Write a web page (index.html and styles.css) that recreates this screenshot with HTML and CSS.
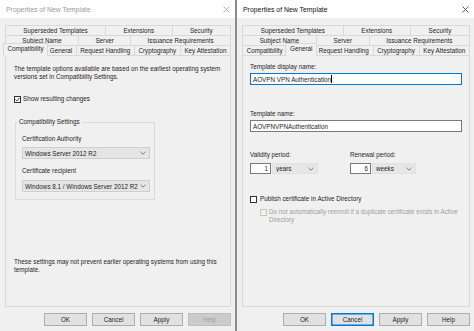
FILE: index.html
```html
<!DOCTYPE html>
<html lang="en">
<head>
<meta charset="utf-8">
<title>Properties of New Template</title>
<link rel="stylesheet" href="styles.css">
</head>
<body>
<div class="screen">
  <section class="win win-left inactive">
    <header class="titlebar">
      <span class="title">Properties of New Template</span>
      <svg class="close" width="7" height="7" viewBox="0 0 7 7"><path d="M0.5 0.5L6.5 6.5M6.5 0.5L0.5 6.5"/></svg>
    </header>
    <div class="content">
      <div class="tabs">
        <div class="tabrow"><span class="tab">Superseded Templates</span><span class="tab">Extensions</span><span class="tab">Security</span></div>
        <div class="tabrow"><span class="tab">Subject Name</span><span class="tab">Server</span><span class="tab">Issuance Requirements</span></div>
        <div class="tabrow"><span class="tab selected">Compatibility</span><span class="tab">General</span><span class="tab">Request Handling</span><span class="tab">Cryptography</span><span class="tab">Key Attestation</span></div>
      </div>
      <div class="panel compat">
        <p class="note">The template options available are based on the earliest operating system versions set in Compatibility Settings.</p>
        <div class="check show-changes">
          <span class="box"><svg width="5" height="5" viewBox="0 0 5 5"><path d="M0.4 2.4L1.9 3.9L4.6 0.8"/></svg></span>
          <span>Show resulting changes</span>
        </div>
        <fieldset class="group">
          <legend>Compatibility Settings</legend>
          <div class="field-label">Certification Authority</div>
          <div class="combo list"><span class="combo-text">Windows Server 2012 R2</span><svg class="chev" width="6" height="4" viewBox="0 0 6 4"><path d="M0.5 0.8L3 3.2L5.5 0.8"/></svg></div>
          <div class="field-label second">Certificate recipient</div>
          <div class="combo list second-combo"><span class="combo-text">Windows 8.1 / Windows Server 2012 R2</span><svg class="chev" width="6" height="4" viewBox="0 0 6 4"><path d="M0.5 0.8L3 3.2L5.5 0.8"/></svg></div>
        </fieldset>
        <p class="note bottom-note">These settings may not prevent earlier operating systems from using this template.</p>
      </div>
      <div class="buttons">
        <span class="btn">OK</span><span class="btn">Cancel</span><span class="btn">Apply</span><span class="btn disabled">Help</span>
      </div>
    </div>
  </section>
  <div class="divider"></div>
  <section class="win win-right active">
    <header class="titlebar">
      <span class="title">Properties of New Template</span>
      <svg class="close" width="7" height="7" viewBox="0 0 7 7"><path d="M0.5 0.5L6.5 6.5M6.5 0.5L0.5 6.5"/></svg>
    </header>
    <div class="content">
      <div class="tabs">
        <div class="tabrow"><span class="tab">Superseded Templates</span><span class="tab">Extensions</span><span class="tab">Security</span></div>
        <div class="tabrow"><span class="tab">Subject Name</span><span class="tab">Server</span><span class="tab">Issuance Requirements</span></div>
        <div class="tabrow"><span class="tab">Compatibility</span><span class="tab selected">General</span><span class="tab">Request Handling</span><span class="tab">Cryptography</span><span class="tab">Key Attestation</span></div>
      </div>
      <div class="panel general">
        <div class="field-label">Template display name:</div>
        <div class="textbox focused"><span>AOVPN VPN Authentication</span><span class="caret"></span></div>
        <div class="field-label spaced">Template name:</div>
        <div class="textbox"><span>AOVPNVPNAuthentication</span></div>
        <div class="periods">
          <div class="period">
            <div class="field-label">Validity period:</div>
            <div class="spin"><span class="num">1</span><span class="combo unit"><span class="combo-text">years</span><svg class="chev" width="6" height="4" viewBox="0 0 6 4"><path d="M0.5 0.8L3 3.2L5.5 0.8"/></svg></span></div>
          </div>
          <div class="period">
            <div class="field-label">Renewal period:</div>
            <div class="spin"><span class="num">6</span><span class="combo unit"><span class="combo-text">weeks</span><svg class="chev" width="6" height="4" viewBox="0 0 6 4"><path d="M0.5 0.8L3 3.2L5.5 0.8"/></svg></span></div>
          </div>
        </div>
        <div class="check publish">
          <span class="box"></span>
          <span>Publish certificate in Active Directory</span>
        </div>
        <div class="check sub disabled-check">
          <span class="box"></span>
          <span class="sub-text">Do not automatically reenroll if a duplicate certificate exists in Active Directory</span>
        </div>
      </div>
      <div class="buttons">
        <span class="btn">OK</span><span class="btn default">Cancel</span><span class="btn">Apply</span><span class="btn">Help</span>
      </div>
    </div>
  </section>
</div>
</body>
</html>
```

FILE: styles.css
```css
* { box-sizing: border-box; margin: 0; padding: 0; }
html, body { width: 474px; height: 331px; overflow: hidden; }
body {
  font-family: "Liberation Sans", Arial, sans-serif;
  font-size: 6.3px;
  color: #1e1e1e;
  background: #8e8e8e;
}
.screen { display: flex; height: 331px; }
.win { display: flex; flex-direction: column; background: #f0f0f0; }
.win-left { width: 235px; }
.divider { width: 2px; background: #8c8c8c; }
.win-right { flex: 1; }

.titlebar {
  height: 18px;
  background: #fff;
  display: flex;
  align-items: center;
  justify-content: space-between;
  padding: 0 5px 0 6px;
  font-size: 6.9px;
}
.inactive .title { color: #9a9a9a; }
.active .title { color: #111; }
.close { display: block; fill: none; stroke-width: 0.8; }
.inactive .close { stroke: #a0a0a0; }
.active .close { stroke: #333; }

.content { flex: 1; display: flex; flex-direction: column; padding: 7px 4px 5px 5px; }

.tabrow { display: flex; height: 10px; }
.tab {
  flex: 1 1 auto;
  height: 10px;
  border: 1px solid #d9d9d9;
  border-bottom: none;
  margin-left: -1px;
  padding: 0 3px;
  text-align: center;
  line-height: 9px;
  white-space: nowrap;
  background: #f0f0f0;
}
.tab:first-child { margin-left: 0; }
.tab.selected {
  position: relative;
  z-index: 1;
  height: 13px;
  margin: -2px -2px -1px -2px;
  line-height: 10px;
  background: #f0f0f0;
}

.panel {
  height: 252px;
  border: 1px solid #d9d9d9;
  background: #f0f0f0;
  display: flex;
  flex-direction: column;
  align-items: flex-start;
}
.compat { padding: 9px 8px 0 8px; }
.general { padding: 7px 7px 0 7px; align-items: stretch; }

.note { line-height: 8px; }
.bottom-note { margin-top: 58px; }

.check { display: flex; align-items: center; line-height: 8px; }
.box {
  width: 7px; height: 7px;
  border: 1px solid #333;
  background: #fff;
  display: flex; align-items: center; justify-content: center;
  flex: none;
}
.box svg { fill: none; stroke: #222; stroke-width: 0.9; }
.show-changes { margin-top: 14px; gap: 2px; }

.group {
  margin-top: 15px;
  margin-left: 1px;
  width: 140px;
  border: 1px solid #dcdcdc;
  padding: 9px 4px 7px 6px;
  min-width: 0;
}
.group legend { margin-left: -5px; padding: 0 2px; line-height: 8px; }
.field-label { line-height: 8px; }
.field-label.second { margin-top: 8px; }

.combo {
  display: flex;
  align-items: center;
  height: 12px;
  background: #e5e5e5;
  border: 1px solid #cfcfcf;
  padding: 0 3px 0 2px;
}
.combo.list { margin-top: 4px; }
.combo.second-combo { margin-top: 5px; }
.combo-text { flex: 1; overflow: hidden; white-space: nowrap; min-width: 0; }
.chev { flex: none; fill: none; stroke: #606060; stroke-width: 0.8; margin-left: 2px; }

.textbox {
  margin-top: 2px;
  height: 12px;
  background: #fff;
  border: 1px solid #7a7a7a;
  display: flex;
  align-items: center;
  padding: 0 2px;
  white-space: nowrap;
}
.textbox.focused { border-color: #0078d7; }
.caret { display: inline-block; width: 1px; height: 8px; background: #000; }
.field-label.spaced { margin-top: 25px; }

.periods { display: flex; margin-top: 19px; }
.period { width: 100px; }
.spin { display: flex; margin-top: 4px; height: 11px; gap: 1px; }
.num {
  width: 21px;
  background: #fff;
  border: 1px solid #7a7a7a;
  text-align: right;
  padding-right: 2px;
  line-height: 9px;
}
.combo.unit { height: 11px; width: 46px; background: #e6e6e6; border-color: #e2e2e2; padding-left: 3px; }
.period + .period .combo.unit { width: 44px; }

.publish { margin-top: 21px; gap: 3px; }
.sub { margin-top: 5px; margin-left: 10px; align-items: flex-start; gap: 2px; }
.disabled-check { color: #9e9e9e; }
.disabled-check .box { border-color: #c6c6c6; background: #f0f0f0; margin-top: 1px; }

.buttons { display: flex; justify-content: flex-end; gap: 5px; margin-top: 6px; }
.btn {
  width: 43px;
  height: 13px;
  background: #e1e1e1;
  border: 1px solid #adadad;
  text-align: center;
  line-height: 11px;
}
.btn.default { border-color: #0078d7; box-shadow: inset 0 0 0 0.5px #0078d7; }
.btn.disabled { background: #cccccc; border-color: #bfbfbf; color: #a0a0a0; }
```
